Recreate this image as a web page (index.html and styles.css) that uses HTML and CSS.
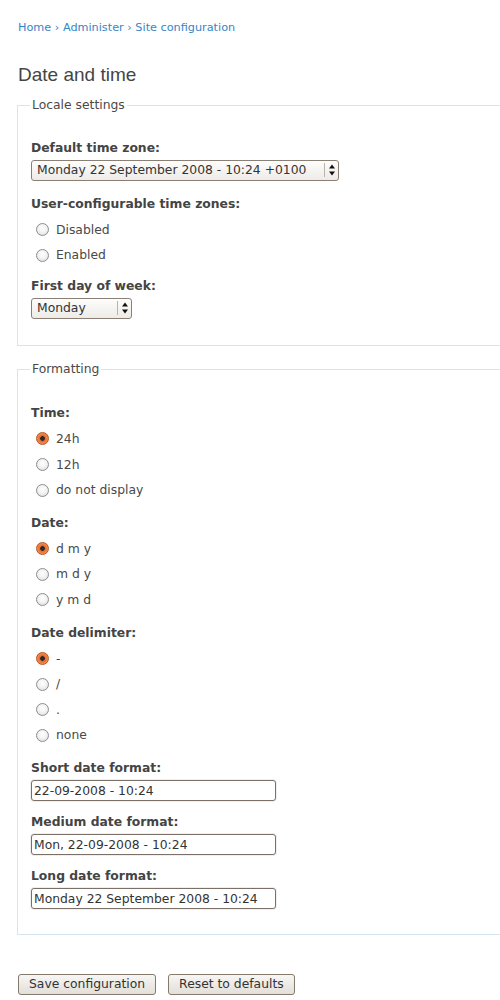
FILE: index.html
```html
<!DOCTYPE html>
<html>
<head>
<meta charset="utf-8">
<title>Date and time</title>
<link rel="stylesheet" href="styles.css">
</head>
<body>
<div class="page">
  <div class="breadcrumb"><a href="#">Home</a> › <a href="#">Administer</a> › <a href="#">Site configuration</a></div>
  <h1 class="title">Date and time</h1>
  <form class="form">
    <fieldset class="fieldset fs-locale">
      <legend class="legend">Locale settings</legend>
      <div class="item item-select">
        <label class="label">Default time zone:</label>
        <span class="select-wrap">
          <select class="select select-wide"><option>Monday 22 September 2008 - 10:24 +0100</option></select>
          <svg class="select-arrows" width="14" height="18" viewBox="0 0 14 18"><line x1="0.5" y1="2" x2="0.5" y2="16" stroke="#b9b3ad"/><path d="M5 7.5 L8 3.5 L11 7.5 Z" fill="#111"/><path d="M5 10.5 L8 14.5 L11 10.5 Z" fill="#111"/></svg>
        </span>
      </div>
      <div class="item item-radios">
        <label class="label">User-configurable time zones:</label>
        <div class="radios">
          <label class="radio"><input type="radio" name="utz"> Disabled</label>
          <label class="radio"><input type="radio" name="utz"> Enabled</label>
        </div>
      </div>
      <div class="item item-select">
        <label class="label">First day of week:</label>
        <span class="select-wrap">
          <select class="select select-narrow"><option>Monday</option></select>
          <svg class="select-arrows" width="14" height="18" viewBox="0 0 14 18"><line x1="0.5" y1="2" x2="0.5" y2="16" stroke="#b9b3ad"/><path d="M5 7.5 L8 3.5 L11 7.5 Z" fill="#111"/><path d="M5 10.5 L8 14.5 L11 10.5 Z" fill="#111"/></svg>
        </span>
      </div>
    </fieldset>
    <fieldset class="fieldset fs-format">
      <legend class="legend">Formatting</legend>
      <div class="item item-radios">
        <label class="label">Time:</label>
        <div class="radios">
          <label class="radio"><input type="radio" name="time" checked> 24h</label>
          <label class="radio"><input type="radio" name="time"> 12h</label>
          <label class="radio"><input type="radio" name="time"> do not display</label>
        </div>
      </div>
      <div class="item item-radios">
        <label class="label">Date:</label>
        <div class="radios">
          <label class="radio"><input type="radio" name="date" checked> d m y</label>
          <label class="radio"><input type="radio" name="date"> m d y</label>
          <label class="radio"><input type="radio" name="date"> y m d</label>
        </div>
      </div>
      <div class="item item-radios">
        <label class="label">Date delimiter:</label>
        <div class="radios">
          <label class="radio"><input type="radio" name="delim" checked> -</label>
          <label class="radio"><input type="radio" name="delim"> /</label>
          <label class="radio"><input type="radio" name="delim"> .</label>
          <label class="radio"><input type="radio" name="delim"> none</label>
        </div>
      </div>
      <div class="item item-text">
        <label class="label">Short date format:</label>
        <input class="text" type="text" value="22-09-2008 - 10:24">
      </div>
      <div class="item item-text">
        <label class="label">Medium date format:</label>
        <input class="text" type="text" value="Mon, 22-09-2008 - 10:24">
      </div>
      <div class="item item-text">
        <label class="label">Long date format:</label>
        <input class="text" type="text" value="Monday 22 September 2008 - 10:24">
      </div>
    </fieldset>
    <div class="buttons">
      <button type="button" class="button">Save configuration</button>
      <button type="button" class="button">Reset to defaults</button>
    </div>
  </form>
</div>
</body>
</html>
```
FILE: styles.css
```css
html, body {
  margin: 0;
  padding: 0;
  background: #fff;
}
body {
  font-family: "DejaVu Sans", "Bitstream Vera Sans", sans-serif;
  font-size: 12.35px;
  color: #494949;
}
.page {
  overflow: hidden;
  padding: 21px 0 0 18px;
}
.breadcrumb {
  font-size: 11.25px;
  line-height: 14px;
  color: #3685c8;
}
.breadcrumb a {
  color: #3685c8;
  text-decoration: none;
}
.title {
  margin: 28px 0 10px 0;
  font-family: "Liberation Sans", Arial, sans-serif;
  font-weight: normal;
  font-size: 19px;
  line-height: 24px;
  color: #454545;
}
.form {
  margin: 0;
}
.fieldset {
  margin: 0 -40px 0 -1px;
  border: 1px solid #d5e5f1;
  padding: 27px 0 26px 13px;
  min-width: 0;
}
.fs-format {
  margin-top: 15px;
  padding-top: 28px;
  padding-bottom: 25px;
}
.legend {
  padding: 0 2px;
  margin-left: -1px;
  line-height: 16px;
  color: #494949;
}
.item {
  margin-top: 15px;
}
.item:first-of-type {
  margin-top: 0;
}
.label {
  display: block;
  font-weight: bold;
  line-height: 16px;
  margin-bottom: 5px;
  color: #444;
}
.item-select .label {
  margin-bottom: 4px;
}
.item-text .label {
  margin-bottom: 4px;
}
.fs-locale .item-radios + .item {
  margin-top: 10px;
}
.fs-format .item-radios + .item {
  margin-top: 12px;
}
.fs-format .item-radios + .item-text {
  margin-top: 12px;
}
.fs-format .item-text + .item-text {
  margin-top: 13px;
}
.radios {
  display: flex;
  flex-direction: column;
}
.radio {
  display: flex;
  align-items: center;
  height: 25.6px;
  padding-left: 5px;
  line-height: 16px;
  color: #494949;
}
.radio input {
  -webkit-appearance: none;
  appearance: none;
  width: 13px;
  height: 13px;
  margin: 0 7px 0 0;
  border: 1px solid #8e8e8e;
  border-radius: 50%;
  background: radial-gradient(circle at 50% 40%, #ffffff 0%, #f3f3f3 45%, #d6d6d6 100%);
  flex: none;
}
.radio input:checked {
  border-color: #b9531c;
  background: radial-gradient(circle, #2a2a2a 0 2px, #e6672a 2.6px, #f08348 60%, #f4a06e 100%);
}
.select-wrap {
  position: relative;
  display: inline-block;
  vertical-align: top;
}
.select {
  -webkit-appearance: none;
  appearance: none;
  display: block;
  height: 21px;
  margin: 0;
  border: 1px solid #8a7f75;
  border-radius: 3px;
  background: linear-gradient(#fdfdfc, #eeebe7);
  font-family: "DejaVu Sans", sans-serif;
  font-size: 12.35px;
  color: #333;
  padding: 0 0 0 5px;
  line-height: 19px;
}
.select-wide {
  width: 308px;
}
.select-narrow {
  width: 101px;
}
.select-arrows {
  position: absolute;
  right: 1px;
  top: 1px;
  pointer-events: none;
}
.text {
  display: block;
  box-sizing: border-box;
  width: 245px;
  height: 21px;
  margin: 0;
  padding: 0 2px;
  border: 1px solid #7c7066;
  border-radius: 3px;
  box-shadow: 0 0 0 1px #f1efed;
  background: #fff;
  font-family: "DejaVu Sans", sans-serif;
  font-size: 12.35px;
  color: #333;
  outline: none;
}
.buttons {
  display: flex;
  gap: 12px;
  margin-top: 39px;
}
.button {
  height: 21px;
  margin: 0;
  padding: 0 10px;
  border: 1px solid #85796e;
  border-radius: 3px;
  background: linear-gradient(#f7f6f4, #e3dfd9);
  font-family: "DejaVu Sans", sans-serif;
  font-size: 12.35px;
  color: #333;
  line-height: 19px;
}
```
